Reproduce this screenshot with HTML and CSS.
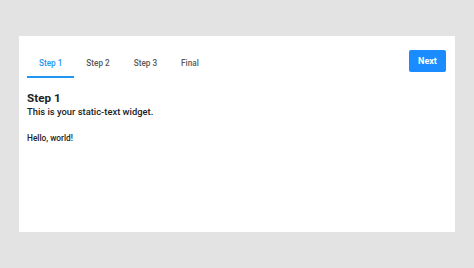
FILE: index.html
```html
<!DOCTYPE html>
<html lang="en">
<head>
  <meta charset="UTF-8" />
  <title>Wizard</title>
  <link rel="stylesheet" href="styles.css">
</head>
<body>
  <div class="card">
    <div class="toolbar">
      <div class="tabs">
        <div class="tab active">Step 1</div>
        <div class="tab">Step 2</div>
        <div class="tab">Step 3</div>
        <div class="tab">Final</div>
      </div>
      <button class="next">Next</button>
    </div>

    <div class="content">
      <h2>Step 1</h2>
      <p class="subtitle">This is your static-text widget.</p>
      <p class="text">Hello, world!</p>
    </div>
  </div>
</body>
</html>
```

FILE: styles.css
```css
html, body {
  margin: 0;
  height: 100%;
}

body {
  font-family: Roboto, "Noto Sans", sans-serif;
  background: #e3e3e3;
  color: #222;
  padding: 36px 19px;
  box-sizing: border-box;
}

.card {
  background: #fff;
  height: 196px;
  padding: 0 9px 0 8px;
  box-sizing: border-box;
}

.toolbar {
  display: flex;
  justify-content: space-between;
  align-items: flex-start;
}

.tabs {
  display: flex;
  margin-top: 22px;
}

.tab {
  font-size: 8.2px;
  line-height: 10px;
  font-weight: 500;
  color: #5a5a5a;
  padding: 0 12px 8px;
  border-bottom: 2px solid transparent;
}

.tab.active {
  color: #2196f3;
  border-bottom-color: #2196f3;
}

.next {
  margin-top: 14px;
  width: 37px;
  height: 22px;
  padding: 0;
  background: #1a8cff;
  color: #fff;
  border: none;
  border-radius: 2px;
  font-family: inherit;
  font-size: 9px;
  font-weight: 700;
  cursor: pointer;
}

.content h2 {
  margin: 13px 0 0;
  font-size: 11.7px;
  line-height: 14px;
  font-weight: 700;
}

.subtitle {
  margin: 1px 0 0;
  font-size: 9.4px;
  line-height: 12px;
  font-weight: 500;
}

.text {
  margin: 15px 0 0;
  font-size: 8.3px;
  line-height: 10px;
  font-weight: 500;
}
```
